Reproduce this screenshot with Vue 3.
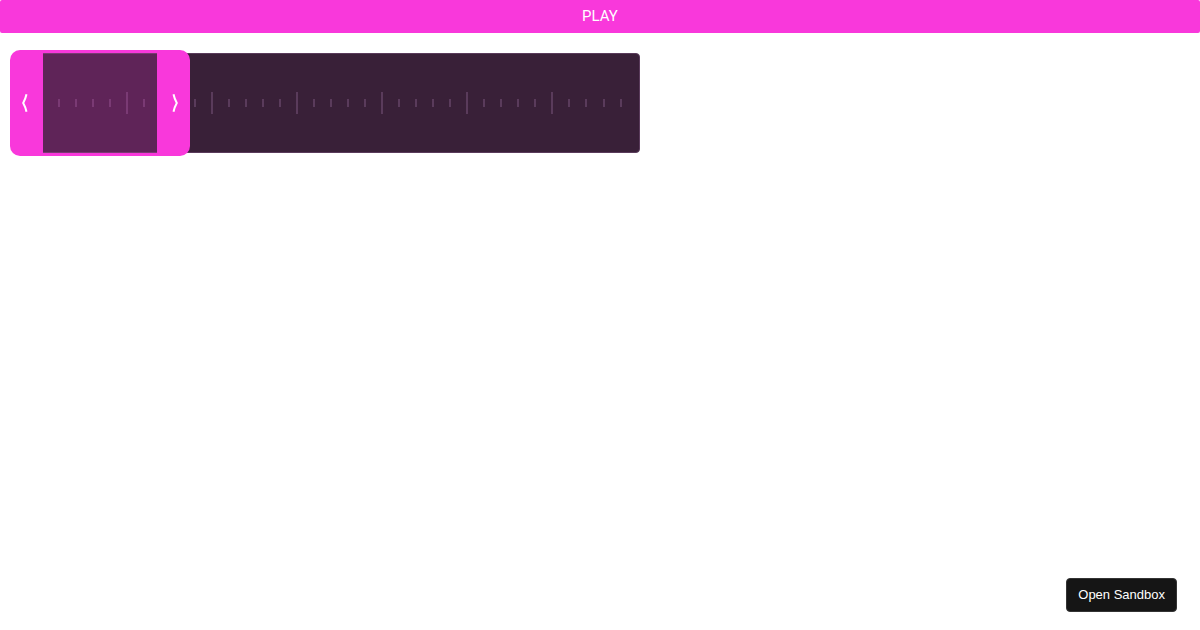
<script setup>
const TICK_STEP = 630 / 37
const ticks = Array.from({ length: 36 }, (_, i) => {
  const tall = i % 5 === 1
  return { x: Math.round(12.6 + i * TICK_STEP), y: tall ? 0 : 7, height: tall ? 22 : 8 }
})
</script>

<template>
  <main class="page">
    <button class="play" type="button">PLAY</button>
    <section class="timeline" aria-label="Timeline">
      <div class="track">
        <svg class="ruler" width="628" height="22" aria-hidden="true">
          <rect v-for="t in ticks" :key="t.x" :x="t.x" :y="t.y" width="2" :height="t.height" />
        </svg>
      </div>
      <div class="selection">
        <button class="handle start" type="button" aria-label="Trim start">
          <svg width="6" height="18" viewBox="0 0 6 18" aria-hidden="true">
            <path d="M4.5 0.3C3.8 3.6 2.7 6.3 1.2 9C2.7 11.7 3.8 14.4 4.5 17.7" />
          </svg>
        </button>
        <div class="range"></div>
        <button class="handle end" type="button" aria-label="Trim end">
          <svg width="6" height="18" viewBox="0 0 6 18" aria-hidden="true">
            <path d="M1.5 0.3C2.2 3.6 3.3 6.3 4.8 9C3.3 11.7 2.2 14.4 1.5 17.7" />
          </svg>
        </button>
      </div>
    </section>
    <a class="sandbox" href="#">Open Sandbox</a>
  </main>
</template>

<style>
body {
  background: #fff;
}
</style>

<style scoped>
.page {
  min-height: 100vh;
}
.play {
  display: block;
  width: 100%;
  height: 33px;
  padding: 0;
  border: 0;
  border-radius: 2px;
  background: #f938db;
  color: #fff;
  font: 15px/33px Roboto, sans-serif;
}
.timeline {
  position: relative;
  max-width: 630px;
  margin: 20px 10px;
}
.track {
  box-sizing: border-box;
  display: flex;
  align-items: center;
  height: 100px;
  overflow: hidden;
  border: 1px solid #5a3b5b;
  border-radius: 12px 4px 4px 12px;
  background: #392038;
}
.ruler {
  flex: none;
  fill: #5a3b5b;
}
.selection {
  position: absolute;
  top: -3px;
  bottom: -3px;
  left: 0;
  display: flex;
  width: 180px;
}
.range {
  flex: 1;
  border: solid #f938db;
  border-width: 3px 0;
  background: rgba(249, 56, 219, 0.2);
  background-clip: padding-box;
}
.handle {
  display: flex;
  align-items: center;
  width: 33px;
  padding: 0 12px;
  border: 0;
  background: #f938db;
}
.handle svg {
  flex: none;
  fill: none;
  stroke: #fff;
  stroke-width: 2;
}
.start {
  border-radius: 10px 0 0 10px;
}
.end {
  justify-content: flex-end;
  border-radius: 0 10px 10px 0;
}
.sandbox {
  position: fixed;
  right: 23px;
  bottom: 18px;
  padding: 8px 11px;
  border: 1px solid #343434;
  border-radius: 4px;
  background: #151515;
  color: #fff;
  font: 13px/16px "Liberation Sans", Arial, sans-serif;
  text-decoration: none;
}
</style>
